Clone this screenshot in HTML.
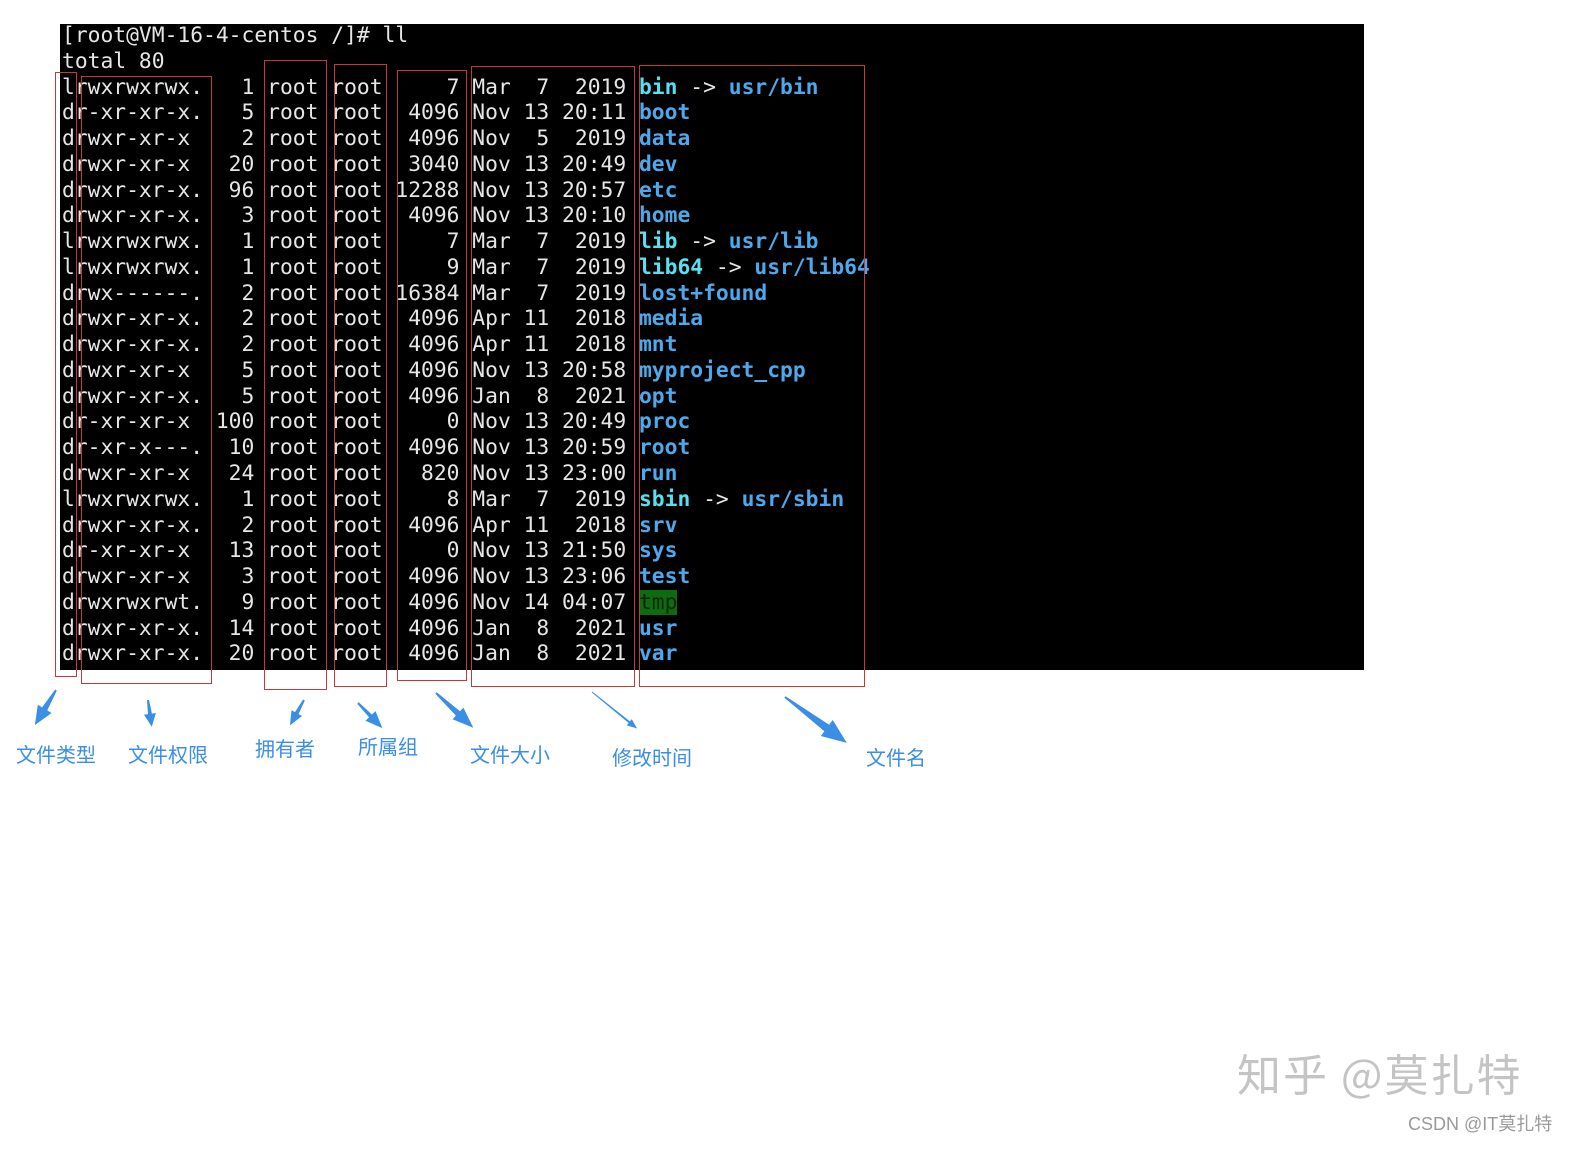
<!DOCTYPE html>
<html><head><meta charset="utf-8"><style>
body{margin:0;width:1585px;height:1153px;background:#fff;position:relative;overflow:hidden}
#term{position:absolute;left:60px;top:24px;width:1304px;height:646px;background:#000}
pre{position:absolute;left:62px;top:23px;margin:0;font-family:"DejaVu Sans Mono","Liberation Mono",monospace;font-size:21.3px;line-height:25.77px;color:#e6e6e6;letter-spacing:0}
.d{color:#4ea9ec;font-weight:bold}
.l{color:#58e0f0;font-weight:bold}
.t{background:#0f6b0f;color:#0a2a0a}
.b{position:absolute;border:1px solid #c23a3a}
.lab{position:absolute;font-family:"Noto Sans CJK SC",sans-serif;font-size:20px;color:#3a8ee6;white-space:nowrap}
</style></head><body>
<div id="term"></div>
<pre>[root@VM-16-4-centos /]# ll
total 80
lrwxrwxrwx.   1 root root     7 Mar  7  2019 <span class="l">bin</span> -&gt; <span class="d">usr/bin</span>
dr-xr-xr-x.   5 root root  4096 Nov 13 20:11 <span class="d">boot</span>
drwxr-xr-x    2 root root  4096 Nov  5  2019 <span class="d">data</span>
drwxr-xr-x   20 root root  3040 Nov 13 20:49 <span class="d">dev</span>
drwxr-xr-x.  96 root root 12288 Nov 13 20:57 <span class="d">etc</span>
drwxr-xr-x.   3 root root  4096 Nov 13 20:10 <span class="d">home</span>
lrwxrwxrwx.   1 root root     7 Mar  7  2019 <span class="l">lib</span> -&gt; <span class="d">usr/lib</span>
lrwxrwxrwx.   1 root root     9 Mar  7  2019 <span class="l">lib64</span> -&gt; <span class="d">usr/lib64</span>
drwx------.   2 root root 16384 Mar  7  2019 <span class="d">lost+found</span>
drwxr-xr-x.   2 root root  4096 Apr 11  2018 <span class="d">media</span>
drwxr-xr-x.   2 root root  4096 Apr 11  2018 <span class="d">mnt</span>
drwxr-xr-x    5 root root  4096 Nov 13 20:58 <span class="d">myproject_cpp</span>
drwxr-xr-x.   5 root root  4096 Jan  8  2021 <span class="d">opt</span>
dr-xr-xr-x  100 root root     0 Nov 13 20:49 <span class="d">proc</span>
dr-xr-x---.  10 root root  4096 Nov 13 20:59 <span class="d">root</span>
drwxr-xr-x   24 root root   820 Nov 13 23:00 <span class="d">run</span>
lrwxrwxrwx.   1 root root     8 Mar  7  2019 <span class="l">sbin</span> -&gt; <span class="d">usr/sbin</span>
drwxr-xr-x.   2 root root  4096 Apr 11  2018 <span class="d">srv</span>
dr-xr-xr-x   13 root root     0 Nov 13 21:50 <span class="d">sys</span>
drwxr-xr-x    3 root root  4096 Nov 13 23:06 <span class="d">test</span>
drwxrwxrwt.   9 root root  4096 Nov 14 04:07 <span class="t">tmp</span>
drwxr-xr-x.  14 root root  4096 Jan  8  2021 <span class="d">usr</span>
drwxr-xr-x.  20 root root  4096 Jan  8  2021 <span class="d">var</span></pre>
<div class="b" style="left:55px;top:72px;width:20px;height:603px"></div>
<div class="b" style="left:81px;top:76px;width:129px;height:606px"></div>
<div class="b" style="left:264px;top:60px;width:61px;height:628px"></div>
<div class="b" style="left:334px;top:64px;width:51px;height:621px"></div>
<div class="b" style="left:397px;top:70px;width:68px;height:609px"></div>
<div class="b" style="left:471px;top:66px;width:162px;height:619px"></div>
<div class="b" style="left:639px;top:65px;width:224px;height:620px"></div>
<svg style="position:absolute;left:0;top:0" width="1585" height="1153">
<g fill="#3a8ee6">
<polygon transform="translate(56,690) rotate(121)" points="0,-1 22,-3 22,-8 41,0 22,8 22,3 0,1"/>
<polygon transform="translate(148,700) rotate(82)" points="0,-1 14,-2 14,-6 27,0 14,6 14,2 0,1"/>
<polygon transform="translate(304,700) rotate(119)" points="0,-1 15,-2 15,-6 29,0 15,6 15,2 0,1"/>
<polygon transform="translate(358,703) rotate(46)" points="0,-1 18,-2 18,-7 35,0 18,7 18,2 0,1"/>
<polygon transform="translate(436,693) rotate(43)" points="0,-1 30,-3 30,-8 51,0 30,8 30,3 0,1"/>
<polygon transform="translate(592,692) rotate(39)" points="0,-0.5 48,-1 48,-4 58,0 48,4 48,1 0,0.5"/>
<polygon transform="translate(785,697) rotate(36.6)" points="0,-1 52,-4 52,-10 77,0 52,10 52,4 0,1"/>
</g></svg>
<div class="lab" style="left:16px;top:739px">文件类型</div>
<div class="lab" style="left:128px;top:739px">文件权限</div>
<div class="lab" style="left:255px;top:733px">拥有者</div>
<div class="lab" style="left:358px;top:731px">所属组</div>
<div class="lab" style="left:470px;top:739px">文件大小</div>
<div class="lab" style="left:612px;top:742px">修改时间</div>
<div class="lab" style="left:866px;top:742px">文件名</div>
<div style="position:absolute;left:1237px;top:1040px;font-family:'Noto Sans CJK SC',sans-serif;font-size:44px;color:#c4c4c4;white-space:nowrap;letter-spacing:2px">知乎 @莫扎特</div>
<div style="position:absolute;left:1408px;top:1110px;font-family:'Liberation Sans','Noto Sans CJK SC',sans-serif;font-size:18px;color:#9a9a9a;white-space:nowrap">CSDN @IT莫扎特</div>
</body></html>
